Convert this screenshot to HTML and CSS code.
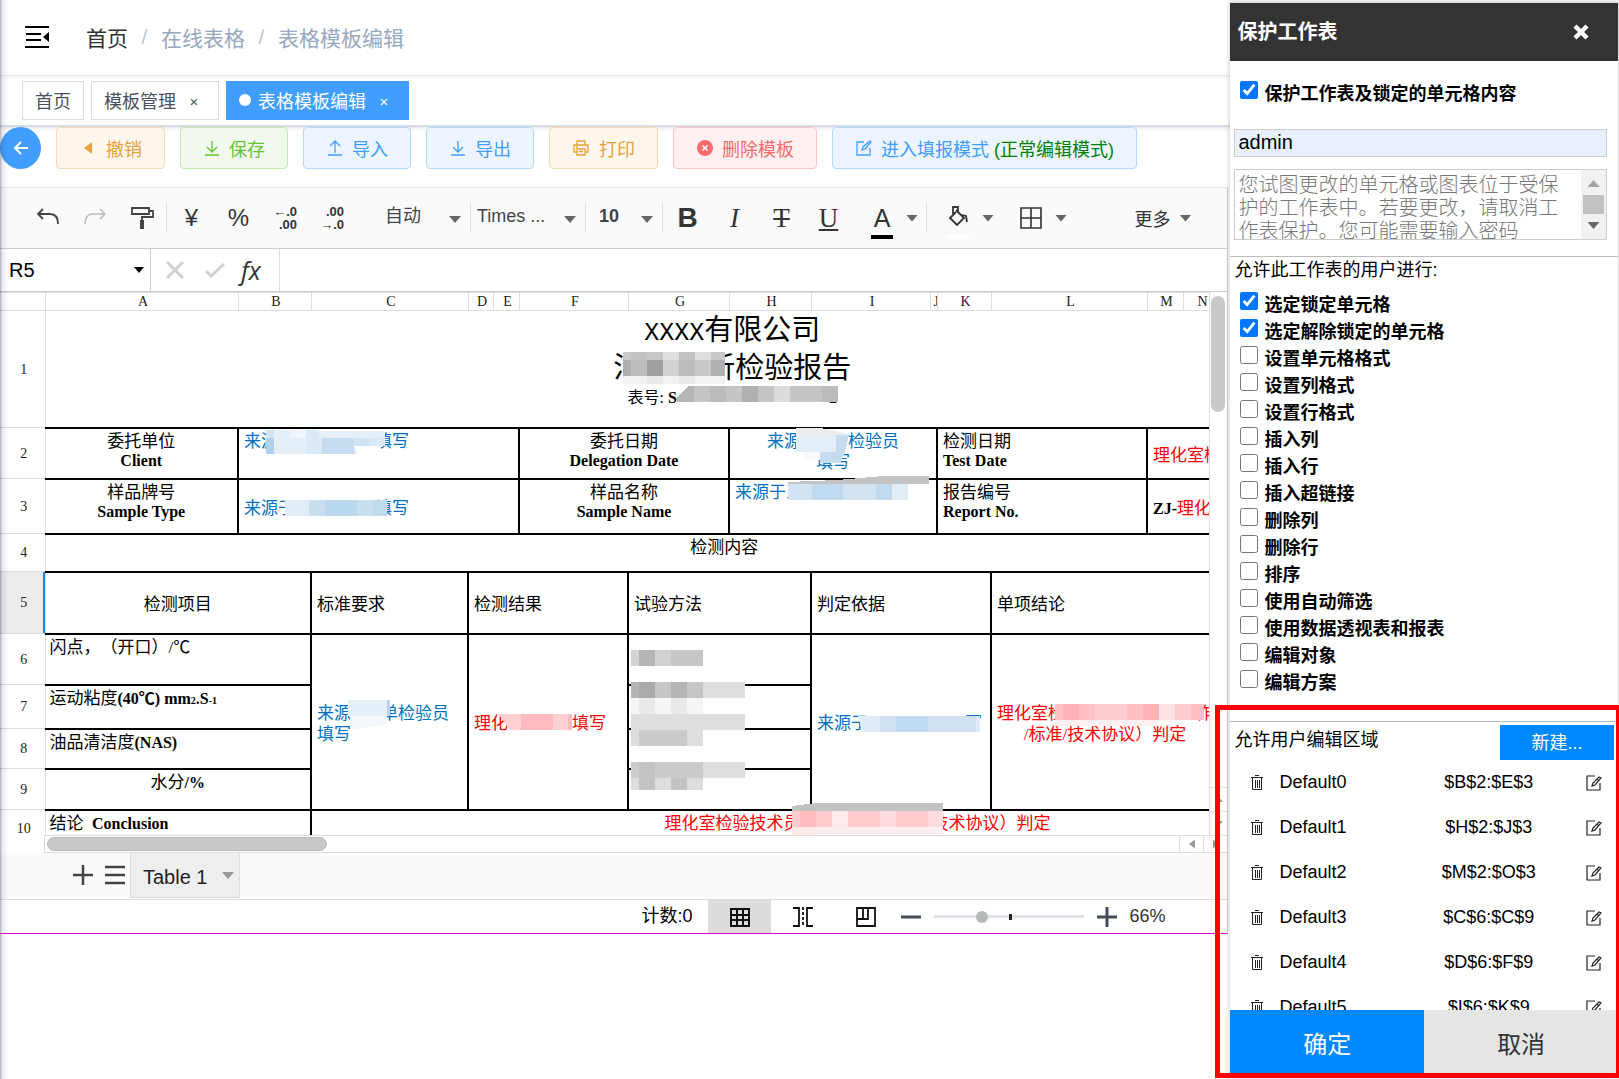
FILE: index.html
```html
<!DOCTYPE html>
<html lang="zh-CN">
<head>
    <meta charset="UTF-8">
    <meta name="viewport" content="width=device-width, initial-scale=1.0">
    <title>表格模板编辑</title>
    <link rel="stylesheet" href="styles.css">
</head>
<body>
<main class="app">
    <header class="navbar">
        <button class="hamburger" aria-label="菜单">
            <svg width="24" height="22" viewBox="0 0 24 22" fill="#000"><path d="M0 0h24v2H0zM1 7h15v2H1zM1 13h15v2H1zM0 20h24v2H0zM24 6v10l-6-5z"/></svg>
        </button>
        <nav class="breadcrumb">
            <a href="#">首页</a><i>/</i><span>在线表格</span><i>/</i><span>表格模板编辑</span>
        </nav>
    </header>

    <nav class="tags">
        <a class="tag" href="#">首页</a>
        <a class="tag" href="#">模板管理<span class="tag-close">×</span></a>
        <a class="tag active" href="#">表格模板编辑<span class="tag-close">×</span></a>
    </nav>

    <div class="actions">
        <button class="back" aria-label="返回">
            <svg width="16" height="16" viewBox="0 0 16 16" fill="none" stroke="#fff" stroke-width="2"><path d="M15 8H2M8 2L2 8l6 6"/></svg>
        </button>
        <button class="btn warning">
            <svg width="18" height="18" viewBox="0 0 18 18" fill="currentColor"><path d="M13 3v12L5 9z"/></svg>撤销
        </button>
        <button class="btn success">
            <svg width="18" height="18" viewBox="0 0 18 18" fill="none" stroke="currentColor" stroke-width="1.3"><path d="M2 16h14M9 2v11M4 8l5 5 5-5"/></svg>保存
        </button>
        <button class="btn primary">
            <svg width="18" height="18" viewBox="0 0 18 18" fill="none" stroke="currentColor" stroke-width="1.3"><path d="M2 16h14M9 14V2M4 7l5-5 5 5"/></svg>导入
        </button>
        <button class="btn primary">
            <svg width="18" height="18" viewBox="0 0 18 18" fill="none" stroke="currentColor" stroke-width="1.3"><path d="M2 16h14M9 2v11M4 8l5 5 5-5"/></svg>导出
        </button>
        <button class="btn warning">
            <svg width="18" height="18" viewBox="0 0 18 18" fill="none" stroke="currentColor" stroke-width="1.3"><path d="M5 6V2h8v4M5 13H2V6h14v7h-3M5 10h8v6H5zM4 8h2M7 12.500h4"/></svg>打印
        </button>
        <button class="btn danger">
            <svg width="18" height="18" viewBox="0 0 18 18"><circle cx="9" cy="9" r="8" fill="currentColor"/><path d="M6.500 6.500l5 5M11.500 6.500l-5 5" stroke="#fff" stroke-width="1.600"/></svg>删除模板
        </button>
        <button class="btn primary">
            <svg width="18" height="18" viewBox="0 0 18 18" fill="none" stroke="currentColor" stroke-width="1.3"><path d="M9 3H2v13h13V9M7 11l1-3 7-6 1 1-6 7z"/></svg>进入填报模式&nbsp;<span class="mode">(正常编辑模式)</span>
        </button>
    </div>

    <section class="editor">
        <div class="ribbon">
            <button class="tool" aria-label="撤消"><svg width="24" height="24" viewBox="0 0 24 24" fill="none" stroke="#444" stroke-width="1.800"><path d="M7 3L2 8l5 5M2 8h12c5 0 8 3 8 10"/></svg></button>
            <button class="tool" aria-label="重做"><svg width="24" height="24" viewBox="0 0 24 24" fill="none" stroke="#bbb" stroke-width="1.500"><path d="M17 3l5 5-5 5M22 8H10c-5 0-8 3-8 10"/></svg></button>
            <button class="tool" aria-label="格式刷"><svg width="24" height="24" viewBox="0 0 24 24" fill="none" stroke="#444" stroke-width="1.800"><path d="M2 2h17v6H2zM19 5h4v6H12v4"/><path d="M12 14v9" stroke-width="4"/></svg></button>
            <span class="sep"></span>
            <button class="tool sign">¥</button>
            <button class="tool sign">%</button>
            <button class="tool decimals"><span>←.0</span><span>.00</span></button>
            <button class="tool decimals"><span>.00</span><span>→.0</span></button>
            <select class="format-select" aria-label="数字格式"><option>自动</option></select>
            <span class="sep"></span>
            <select class="font-select" aria-label="字体"><option>Times ...</option></select>
            <span class="sep"></span>
            <select class="size-select" aria-label="字号"><option>10</option></select>
            <span class="sep"></span>
            <button class="tool bold">B</button>
            <button class="tool letter"><em>I</em></button>
            <button class="tool letter"><s>T</s></button>
            <button class="tool letter"><u>U</u></button>
            <button class="tool split color"><span class="swatch">A</span><i class="caret"></i></button>
            <span class="sep"></span>
            <button class="tool split fill" aria-label="填充颜色"><span class="swatch"><svg width="22" height="22" viewBox="0 0 22 22" fill="none" stroke="#333" stroke-width="1.800"><path d="M6 9V2h5v6M9 5l8 8-7 7-7-7 6-6M15 10l4 1 1 6"/></svg></span><i class="caret"></i></button>
            <button class="tool split" aria-label="边框"><svg width="22" height="22" viewBox="0 0 22 22" fill="none" stroke="#333" stroke-width="1.600"><path d="M1 1h20v20H1zM11 1v20M1 11h20"/></svg><i class="caret"></i></button>
            <button class="tool more">更多<i class="caret"></i></button>
        </div>

        <div class="formula-bar">
            <label class="name-box"><input type="text" value="R5" aria-label="名称框"><i class="caret"></i></label>
            <div class="formula-tools">
                <button aria-label="取消"><svg width="20" height="20" viewBox="0 0 20 20" fill="none" stroke="#d0d0d0" stroke-width="3"><path d="M2 2l16 16M18 2L2 18"/></svg></button>
                <button aria-label="输入"><svg width="20" height="20" viewBox="0 0 20 20" fill="none" stroke="#d0d0d0" stroke-width="3"><path d="M1 11l5 5L19 4"/></svg></button>
                <button class="fx">fx</button>
            </div>
            <input class="formula" type="text" aria-label="公式">
        </div>

        <div class="sheet-area">
            <div class="sheet">
                <table class="grid">
                    <colgroup>
                        <col class="c-head"><col class="c-a"><col class="c-b"><col class="c-c"><col class="c-d"><col class="c-e"><col class="c-f"><col class="c-g"><col class="c-h"><col class="c-i"><col class="c-j"><col class="c-k"><col class="c-l"><col class="c-m"><col class="c-n"><col class="c-o">
                    </colgroup>
                    <thead>
                        <tr><th></th><th>A</th><th>B</th><th>C</th><th>D</th><th>E</th><th>F</th><th>G</th><th>H</th><th>I</th><th>J</th><th>K</th><th>L</th><th>M</th><th>N</th><th>O</th></tr>
                    </thead>
                    <tbody>
                        <tr class="r1">
                            <th>1</th>
                            <td class="title" colspan="15">
                                <div class="name"><span class="latin">XXXX</span>有限公司</div>
                                <div class="name">油<span class="gap short"></span>析检验报告</div>
                                <div class="code">表号: <b>S</b><span class="gap full"></span><b>2</b></div>
                            </td>
                        </tr>
                        <tr class="r2">
                            <th>2</th>
                            <td class="pair center">委托单位<br><b>Client</b></td>
                            <td class="source" colspan="4">来源<span class="gap wide"></span>填写</td>
                            <td class="pair center" colspan="2">委托日期<br><b>Delegation Date</b></td>
                            <td class="source center" colspan="3">来源<span class="gap"></span>检验员<br>填写</td>
                            <td class="pair" colspan="2">检测日期<br><b>Test Date</b></td>
                            <td class="lab middle" colspan="3">理化室检验员填写</td>
                        </tr>
                        <tr class="r3">
                            <th>3</th>
                            <td class="pair center">样品牌号<br><b>Sample Type</b></td>
                            <td class="source middle" colspan="4">来源于<span class="gap medium"></span>填写</td>
                            <td class="pair center" colspan="2">样品名称<br><b>Sample Name</b></td>
                            <td class="source" colspan="3">来源于工</td>
                            <td class="pair" colspan="2">报告编号<br><b>Report No.</b></td>
                            <td class="lab middle" colspan="3"><b class="prefix">ZJ-</b>理化室</td>
                        </tr>
                        <tr class="r4">
                            <th>4</th>
                            <td class="center" colspan="15">检测内容</td>
                        </tr>
                        <tr class="r5">
                            <th class="current">5</th>
                            <td class="middle center" colspan="2">检测项目</td>
                            <td class="middle">标准要求</td>
                            <td class="middle" colspan="3">检测结果</td>
                            <td class="middle" colspan="2">试验方法</td>
                            <td class="middle" colspan="3">判定依据</td>
                            <td class="middle" colspan="3">单项结论</td>
                            <td></td>
                        </tr>
                        <tr class="r6">
                            <th>6</th>
                            <td class="item" colspan="2">闪点，（开口）/℃</td>
                            <td class="source middle" rowspan="4">来源<span class="gap small"></span>单检验员<br>填写</td>
                            <td class="lab middle" colspan="3" rowspan="4">理化<span class="gap short"></span>填写</td>
                            <td colspan="2"></td>
                            <td class="source middle" colspan="3" rowspan="4">来源于<span class="gap wide"></span>写</td>
                            <td class="lab middle center" colspan="3" rowspan="4">理化室检<span class="gap long"></span>作<br>/标准/技术协议）判定</td>
                            <td rowspan="4"></td>
                        </tr>
                        <tr class="r7">
                            <th>7</th>
                            <td class="item" colspan="2">运动粘度<b>(40℃) mm<small>2</small>.S<small>-1</small></b></td>
                            <td colspan="2"></td>
                        </tr>
                        <tr class="r8">
                            <th>8</th>
                            <td class="item" colspan="2">油品清洁度<b>(NAS)</b></td>
                            <td colspan="2"></td>
                        </tr>
                        <tr class="r9">
                            <th>9</th>
                            <td class="center" colspan="2">水分<b>/%</b></td>
                            <td colspan="2"></td>
                        </tr>
                        <tr class="r10">
                            <th>10</th>
                            <td class="item" colspan="2">结论&nbsp; <b>Conclusion</b></td>
                            <td class="lab center" colspan="13">理化室检验技术员<span class="gap long"></span>技术协议）判定</td>
                        </tr>
                    </tbody>
                </table>

                <!-- pixelated areas over the confidential text -->
                <svg class="mosaic" width="1210" height="543" viewBox="0 0 1210 543" shape-rendering="crispEdges" aria-hidden="true">
                    <g>
                        <path fill="#c8c8c8" d="M623 60h8v8h-8zM647 60h16v8h-16zM711 60h14v8h-14z"/>
                        <path fill="#c2c2c2" d="M631 60h16v8h-16zM679 60h16v8h-16z"/>
                        <path fill="#dedede" d="M663 60h16v8h-16zM695 60h16v8h-16z"/>
                        <path fill="#b0b0b0" d="M623 68h8v16h-8zM711 68h14v16h-14z"/>
                        <path fill="#bdbdbd" d="M631 68h16v16h-16zM679 68h16v16h-16z"/>
                        <path fill="#a0a0a0" d="M647 68h16v16h-16z"/>
                        <path fill="#d2d2d2" d="M663 68h16v16h-16z"/>
                        <path fill="#c9c9c9" d="M695 68h16v16h-16z"/>
                        <path fill="#f2f2f2" d="M623 84h102v8H623z"/>
                        <path fill="#e9e9e9" d="M647 84h16v8h-16zM679 84h16v8h-16z"/>
                    </g>
                    <g>
                        <path fill="#b6b6b6" d="M688 94h6v16h-17v-5z"/>
                        <path fill="#c5c5c5" d="M694 94h144v16H694z"/>
                        <path fill="#bbb" d="M710 94h16v16h-16zM822 94h16v16h-16z"/>
                        <path fill="#b1b1b1" d="M742 94h16v16h-16z"/>
                        <path fill="#dcdcdc" d="M774 94h16v16h-16z"/>
                    </g>
                    <g>
                        <path fill="#e5eff8" d="M266 138h53v1h66v15h-31l4 8h-92z"/>
                        <path fill="#cfe3f2" d="M266 138h8v8h-8zM354 146h16v8h-16z"/>
                        <path fill="#b0d1ea" d="M266 146h8v16h-8z"/>
                        <path fill="#f0f6fb" d="M290 138h16v8h-16z"/>
                        <path fill="#dae9f5" d="M306 138h13v8h-13zM306 146h16v16h-16zM370 146h15v8h-15z"/>
                        <path fill="#c5dcf1" d="M322 146h32v16h-32z"/>
                    </g>
                    <g>
                        <path fill="#e0edf7" d="M285 208h24v16h-24z"/>
                        <path fill="#c8dff0" d="M309 208h16v16h-16zM357 208h16v16h-16z"/>
                        <path fill="#b9d7ed" d="M325 208h32v16h-32z"/>
                        <path fill="#bedaed" d="M373 208h14v16h-14z"/>
                    </g>
                    <g>
                        <path fill="#ececec" d="M796 136h25l28 6v2h-53z"/>
                        <path fill="#e2eef8" d="M796 143h40v17h-40z"/>
                        <path fill="#c5dcf0" d="M836 143h13l-4 17-5 11h-20v-11h16z"/>
                        <path fill="#f8fafd" d="M804 160h16v8h-16z"/>
                    </g>
                    <g>
                        <path fill="#c3c3c3" d="M788 190l49-2 47-4h45v8H788z"/>
                        <path fill="#d2e4f3" d="M788 192h104v16H788z"/>
                        <path fill="#bfdaef" d="M812 192h31v16h-31zM876 192h16v16h-16z"/>
                        <path fill="#e0edf7" d="M892 192h16v16h-16z"/>
                    </g>
                    <g>
                        <path fill="#e4eff8" d="M348 408h39v16h-39z"/>
                        <path fill="#b5d3eb" d="M387 408h3v16h-3z"/>
                        <path fill="#f3f8fc" d="M350 424h37v8l-35 6z"/>
                    </g>
                    <g>
                        <path fill="#ffcfd1" d="M498 422h74v16h-62z"/>
                        <path fill="#ffbbbe" d="M521 422h32v16h-32zM568 422h4v16h-4z"/>
                    </g>
                    <g>
                        <path fill="#c6c6c6" d="M631 358h72v16h-72zM631 390h72v16h-72z"/>
                        <path fill="#d2d2d2" d="M631 358h8v16h-8zM655 358h16v16h-16z"/>
                        <path fill="#b5b5b5" d="M639 358h16v16h-16zM671 390h16v16h-16zM631 390h8v16h-8z"/>
                        <path fill="#aaa" d="M639 390h16v16h-16z"/>
                        <path fill="#dedede" d="M703 390h42v16h-42zM703 470h42v16h-42zM631 422h114v16H631zM631 438h8v16h-8zM687 438h16v16h-16z"/>
                        <path fill="#f5f5f5" d="M631 406h72v16h-72z"/>
                        <path fill="#e9e9e9" d="M639 406h16v16h-16zM671 406h16v16h-16z"/>
                        <path fill="#cbcbcb" d="M639 438h48v16h-48zM631 470h72v16h-72z"/>
                        <path fill="#c3c3c3" d="M639 470h16v16h-16zM639 486h16v12h-16zM671 486h16v12h-16z"/>
                        <path fill="#ddd" d="M631 486h8v12h-8zM655 486h16v12h-16zM687 486h16v12h-16z"/>
                    </g>
                    <g>
                        <path fill="#dfecf7" d="M858 424h22v16h-18zM976 424h4v16h-4z"/>
                        <path fill="#cfe2f3" d="M880 424h96v16h-96z"/>
                        <path fill="#bfdaee" d="M896 424h32v16h-32z"/>
                    </g>
                    <g>
                        <path fill="#ffc0c3" d="M1055 412h149v16h-149z"/>
                        <path fill="#ffb3b6" d="M1063 412h16v16h-16zM1143 412h16v16h-16z"/>
                        <path fill="#ffcdcf" d="M1095 412h32v16h-32zM1175 412h16v16h-16z"/>
                        <path fill="#ffe2e3" d="M1159 412h16v16h-16z"/>
                        <path fill="#fdf0f0" d="M1055 428h104v6h-104z"/>
                    </g>
                    <g>
                        <path fill="#c3c3c3" d="M792 514l25-3h126v8H792z"/>
                        <path fill="#ffcbcd" d="M792 519h151v16H792z"/>
                        <path fill="#ffbbbe" d="M800 519h16v16h-16z"/>
                        <path fill="#fdebeb" d="M832 519h16v16h-16zM792 535h24v8h-24z"/>
                        <path fill="#ffdcdd" d="M880 519h16v16h-16zM928 519h15v16h-15z"/>
                        <path fill="#fbeeee" d="M816 535h127v7H816z"/>
                    </g>
                </svg>
            </div>
            <div class="v-scroll">
                <div class="thumb"></div>
                <button aria-label="向上"><i class="caret up"></i></button>
                <button aria-label="向下"><i class="caret"></i></button>
            </div>
        </div>
        <div class="h-scroll">
            <div class="thumb"></div>
            <button aria-label="向左"><i class="caret left"></i></button>
            <button aria-label="向右"><i class="caret right"></i></button>
        </div>

        <div class="sheet-tabs">
            <button aria-label="添加"><svg width="20" height="20" viewBox="0 0 20 20" stroke="#444" stroke-width="2.500"><path d="M10 0v20M0 10h20"/></svg></button>
            <button aria-label="工作表列表"><svg width="20" height="20" viewBox="0 0 20 20" stroke="#444" stroke-width="2.500"><path d="M0 2h20M0 10h20M0 18h20"/></svg></button>
            <button class="sheet-tab">Table 1<i class="caret"></i></button>
        </div>

        <footer class="status">
            <span class="count">计数:0</span>
            <button class="view active" aria-label="普通"><svg width="20" height="20" viewBox="0 0 20 20" fill="none" stroke="#111" stroke-width="2"><path d="M1 2h18v17H1zM7 2v17M13 2v17M1 8h18M1 13h18"/></svg></button>
            <button class="view" aria-label="分页预览"><svg width="20" height="20" viewBox="0 0 20 20" fill="none" stroke="#111" stroke-width="1.800"><path d="M0 1h6v18H0M20 1h-6v18h6"/><path d="M10 0v20" stroke-dasharray="3 2"/></svg></button>
            <button class="view" aria-label="页面布局"><svg width="20" height="20" viewBox="0 0 20 20" fill="none" stroke="#111" stroke-width="1.800"><path d="M1 1h18v18H1zM1 12h11V1M7 1v11"/></svg></button>
            <button class="zoom" aria-label="缩小"><svg width="22" height="22" viewBox="0 0 22 22" stroke="#444b5a" stroke-width="3"><path d="M1 11h20"/></svg></button>
            <div class="slider"><input type="range" min="0" max="100" value="30" aria-label="缩放"></div>
            <button class="zoom" aria-label="放大"><svg width="22" height="22" viewBox="0 0 22 22" stroke="#444b5a" stroke-width="3"><path d="M1 11h20M11 1v20"/></svg></button>
            <span class="percent">66%</span>
        </footer>
    </section>
</main>

<aside class="panel">
    <header class="panel-header">
        <h2>保护工作表</h2>
        <button aria-label="关闭"><svg width="16" height="16" viewBox="0 0 16 16" stroke="#fff" stroke-width="4.500"><path d="M2 2l12 12M14 2L2 14"/></svg></button>
    </header>
    <div class="protect">
        <label class="check"><input type="checkbox" checked>保护工作表及锁定的单元格内容</label>
        <input class="password" type="text" value="admin" aria-label="密码">
        <div class="message">
            <textarea aria-label="提示信息">您试图更改的单元格或图表位于受保护的工作表中。若要更改，请取消工作表保护。您可能需要输入密码</textarea>
            <div class="message-scroll"><i class="caret up"></i><span></span><i class="caret"></i></div>
        </div>
    </div>
    <div class="permissions">
        <h3>允许此工作表的用户进行:</h3>
        <label class="check"><input type="checkbox" checked>选定锁定单元格</label>
        <label class="check"><input type="checkbox" checked>选定解除锁定的单元格</label>
        <label class="check"><input type="checkbox">设置单元格格式</label>
        <label class="check"><input type="checkbox">设置列格式</label>
        <label class="check"><input type="checkbox">设置行格式</label>
        <label class="check"><input type="checkbox">插入列</label>
        <label class="check"><input type="checkbox">插入行</label>
        <label class="check"><input type="checkbox">插入超链接</label>
        <label class="check"><input type="checkbox">删除列</label>
        <label class="check"><input type="checkbox">删除行</label>
        <label class="check"><input type="checkbox">排序</label>
        <label class="check"><input type="checkbox">使用自动筛选</label>
        <label class="check"><input type="checkbox">使用数据透视表和报表</label>
        <label class="check"><input type="checkbox">编辑对象</label>
        <label class="check"><input type="checkbox">编辑方案</label>
    </div>
    <div class="ranges">
        <div class="ranges-title">
            <h3>允许用户编辑区域</h3>
            <button>新建...</button>
        </div>
        <svg class="symbols" aria-hidden="true">
            <symbol id="trash" viewBox="0 0 12 16"><path d="M0 2.500h12M4 .5h4M1.500 3v11.500h9V3M4.500 5v8M6.500 5v8M8.500 5v8" fill="none" stroke="#222" stroke-width="1"/></symbol>
            <symbol id="edit" viewBox="0 0 16 16"><path d="M9 1H1v14h13V8M6 11l1-3 6-6 2 1-6 7zM11 4l2 2" fill="none" stroke="#222" stroke-width="1.200"/></symbol>
        </svg>
        <table>
            <tr><td><button aria-label="删除"><svg width="12" height="16"><use href="#trash"/></svg></button></td><td>Default0</td><td>$B$2:$E$3</td><td><button aria-label="编辑"><svg width="16" height="16"><use href="#edit"/></svg></button></td></tr>
            <tr><td><button aria-label="删除"><svg width="12" height="16"><use href="#trash"/></svg></button></td><td>Default1</td><td>$H$2:$J$3</td><td><button aria-label="编辑"><svg width="16" height="16"><use href="#edit"/></svg></button></td></tr>
            <tr><td><button aria-label="删除"><svg width="12" height="16"><use href="#trash"/></svg></button></td><td>Default2</td><td>$M$2:$O$3</td><td><button aria-label="编辑"><svg width="16" height="16"><use href="#edit"/></svg></button></td></tr>
            <tr><td><button aria-label="删除"><svg width="12" height="16"><use href="#trash"/></svg></button></td><td>Default3</td><td>$C$6:$C$9</td><td><button aria-label="编辑"><svg width="16" height="16"><use href="#edit"/></svg></button></td></tr>
            <tr><td><button aria-label="删除"><svg width="12" height="16"><use href="#trash"/></svg></button></td><td>Default4</td><td>$D$6:$F$9</td><td><button aria-label="编辑"><svg width="16" height="16"><use href="#edit"/></svg></button></td></tr>
            <tr><td><button aria-label="删除"><svg width="12" height="16"><use href="#trash"/></svg></button></td><td>Default5</td><td>$I$6:$K$9</td><td><button aria-label="编辑"><svg width="16" height="16"><use href="#edit"/></svg></button></td></tr>
        </table>
    </div>
    <div class="panel-footer">
        <button class="ok">确定</button>
        <button>取消</button>
    </div>
    <div class="highlight"></div>
</aside>
</body>
</html>
```

FILE: styles.css
```css
* {
    box-sizing: border-box;
}
body {
    margin: 0;
    height: 100vh;
    overflow: hidden;
    display: grid;
    grid-template-columns: minmax(0, 1fr) 24%;
    font-family: "Liberation Sans", "Noto Sans CJK SC", sans-serif;
    font-size: 18px;
    color: #000;
    background: #fff;
}
button {
    font: inherit;
    color: inherit;
    padding: 0;
    border: 0;
    background: none;
}
svg {
    display: block;
    flex: none;
}
.app {
    position: relative;
    min-width: 0;
}
.app::before {
    content: "";
    position: absolute;
    z-index: 2;
    top: 0;
    left: 0;
    width: 8px;
    height: 100vh;
    background: linear-gradient(90deg, rgba(40, 45, 80, .38), rgba(40, 45, 80, .1) 30%, transparent);
}

/* top navigation */
.navbar {
    height: 76px;
    display: flex;
    align-items: center;
    gap: 37px;
    padding: 0 0 2px 25px;
    border-bottom: 1px solid #f0f0f0;
    box-shadow: 0 1px 4px rgba(0, 21, 41, .08);
}
.breadcrumb {
    display: flex;
    font-size: 21px;
    color: #97a8be;
}
.breadcrumb a {
    color: #303133;
    text-decoration: none;
}
.breadcrumb i {
    width: 33px;
    padding-top: 3px;
    text-align: center;
    font-style: normal;
    color: #c0c4cc;
}
.tags {
    height: 51px;
    display: flex;
    align-items: center;
    gap: 7px;
    padding: 0 22px;
    border-bottom: 2px solid #d8dce5;
    box-shadow: 0 1px 4px rgba(0, 0, 0, .12);
}
.tag {
    height: 39px;
    padding: 0 12px 2px;
    display: flex;
    align-items: center;
    border: 1px solid #d8dce5;
    color: #495060;
    text-decoration: none;
}
.tag.active {
    color: #fff;
    background: #409eff;
    border-color: #409eff;
}
.tag.active::before {
    content: "";
    width: 12px;
    height: 12px;
    margin-right: 7px;
    border-radius: 50%;
    background: #fff;
}
.tag-close {
    width: 16px;
    margin: 3px 4px 0 10px;
    text-align: center;
    font-size: 15px;
}

/* action buttons */
.actions {
    height: 60px;
    display: flex;
    align-items: flex-start;
    gap: 15px;
}
.back {
    width: 41px;
    height: 42px;
    border-radius: 50%;
    background: #409eff;
    display: flex;
    align-items: center;
    justify-content: center;
}
.btn {
    height: 42px;
    padding: 0 22px;
    display: flex;
    align-items: center;
    border: 1px solid;
    border-radius: 4px;
    white-space: nowrap;
}
.btn svg {
    margin-right: 8px;
}
.btn.warning svg {
    margin-right: 9px;
}
.btn.warning {
    color: #e6a23c;
    background: #fdf6ec;
    border-color: #f5dab1;
}
.btn.success {
    color: #67c23a;
    background: #f0f9eb;
    border-color: #c2e7b0;
}
.btn.primary {
    color: #409eff;
    background: #ecf5ff;
    border-color: #b3d8ff;
}
.btn.danger {
    color: #f56c6c;
    background: #fef0f0;
    border-color: #fbc4c4;
}
.mode {
    color: green;
}

/* editor toolbar */
.editor {
    margin-right: 2px;
    border-right: 1px solid #ccc;
    border-top: 1px solid #e3e3e3;
    border-bottom: 1px solid #e0c;
}
.ribbon {
    height: 61px;
    padding: 0 20px 0 24px;
    display: flex;
    align-items: center;
    color: #333;
    background: #fafafc;
    border-bottom: 1px solid #ccc;
}
.tool {
    flex: none;
    width: 47px;
    height: 40px;
    display: flex;
    align-items: center;
    justify-content: center;
}
.sep {
    flex: none;
    width: 1px;
    height: 30px;
    margin: 0 1px;
    background: #ddd;
}
.caret {
    flex: none;
    width: 12px;
    height: 7px;
    background: #666;
    clip-path: polygon(0 0, 100% 0, 50% 100%);
}
.caret.up {
    clip-path: polygon(50% 0, 100% 100%, 0 100%);
}
.caret.left,
.caret.right {
    width: 6px;
    height: 9px;
    clip-path: polygon(0 50%, 100% 0, 100% 100%);
}
.caret.right {
    clip-path: polygon(0 0, 100% 50%, 0 100%);
}
.sign {
    font-size: 24px;
}
.decimals {
    flex-direction: column;
    align-items: flex-end;
    padding-right: 12px;
    font-size: 13px;
    line-height: 13px;
    font-weight: bold;
}
.ribbon select {
    flex: none;
    height: 40px;
    padding: 0 0 4px;
    border: 0;
    appearance: none;
    font: inherit;
    color: #444;
    background: url("data:image/svg+xml,%3Csvg xmlns='http://www.w3.org/2000/svg' width='12' height='7'%3E%3Cpath d='M0 0h12L6 7z' fill='%23666'/%3E%3C/svg%3E") right 8px top 18px no-repeat;
}
.ribbon .format-select {
    width: 99px;
    margin-left: 14px;
    padding-left: 15px;
}
.ribbon .font-select {
    width: 112px;
    padding-left: 5px;
}
.ribbon .size-select {
    width: 74px;
    padding-left: 12px;
    font-weight: bold;
}
.bold {
    font-size: 28px;
    font-weight: bold;
}
.letter {
    font-family: "Liberation Serif", serif;
    font-size: 27px;
}
.split {
    width: 73px;
    gap: 13px;
    padding-left: 12px;
}
.swatch {
    width: 22px;
    height: 36px;
    padding-top: 2px;
    font-size: 25px;
    line-height: 26px;
    border-bottom: 4px solid #000;
    margin-top: 5px;
}
.fill .swatch {
    border-color: #fff;
}
.more {
    width: auto;
    margin-left: auto;
    gap: 9px;
    padding-right: 16px;
}

/* formula bar */
.formula-bar {
    height: 43px;
    display: flex;
    border-bottom: 1px solid #ccc;
}
.formula-bar input {
    border: 0;
    outline: 0;
    font: 20px "Liberation Sans", sans-serif;
    background: none;
}
.name-box {
    width: 151px;
    display: flex;
    align-items: center;
    padding: 0 6px 0 9px;
    border-right: 1px solid #ccc;
}
.name-box input {
    flex: 1;
    min-width: 0;
    padding: 0;
}
.name-box .caret {
    width: 10px;
    height: 6px;
    background: #000;
}
.formula-tools {
    width: 129px;
    display: flex;
    align-items: center;
    gap: 20px;
    padding-left: 14px;
    border-right: 1px solid #ddd;
}
.formula {
    flex: 1;
}
.fx {
    margin-left: -4px;
    font: italic 25px "Open Sans", sans-serif;
    color: #333;
}

/* spreadsheet */
.sheet-area {
    display: grid;
    grid-template-columns: minmax(0, 1fr) 18px;
    height: 543px;
}
.sheet {
    position: relative;
    overflow: hidden;
}
.mosaic {
    position: absolute;
    top: 0;
    left: 0;
}
.grid {
    width: 1405px;
    table-layout: fixed;
    border-collapse: collapse;
    font-family: "Liberation Serif", "Noto Sans CJK SC", serif;
    font-size: 17px;
    line-height: 21px;
    text-spacing-trim: space-all;
}
.grid b {
    font-size: 16px;
}
.grid th {
    padding: 1px 0 0 3px;
    border: 1px solid #ddd;
    border-left: 0;
    font-size: 14px;
    font-weight: normal;
    line-height: 16px;
    color: #222;
    overflow: hidden;
}
.grid td {
    padding: 2px 5px;
    border: 2px solid #000;
    vertical-align: top;
    white-space: nowrap;
}
.grid th + td {
    border-left: 1px solid #ddd;
}
.grid th.current {
    background: #ececec;
    box-shadow: inset -2px 0 #1a86d9;
}
.grid td.title {
    padding: 2px 0 0 16px;
    border-top: 0;
    text-align: center;
}
.grid td.pair {
    padding-top: 3px;
    line-height: 19px;
}
.grid td.item {
    padding-left: 4px;
}
.grid td.center {
    text-align: center;
}
.grid td.middle {
    padding-top: 6px;
    vertical-align: middle;
}
.grid td.source {
    color: #0070c0;
}
.grid td.lab {
    color: #f00;
}
.prefix {
    color: #000;
}
.grid small {
    font-size: 10px;
}
.name {
    font-size: 29px;
    line-height: 34px;
}
.latin {
    font-family: "Liberation Mono", monospace;
    font-size: 25px;
}
.code {
    font-size: 16px;
    line-height: 26px;
}

/* space taken by hidden words */
.gap {
    display: inline-block;
    width: 47px;
}
.gap.small { width: 30px; }
.gap.short { width: 64px; }
.gap.medium { width: 80px; }
.gap.wide { width: 97px; }
.gap.long { width: 131px; }
.gap.full { width: 152px; }

.c-head { width: 45px; }
.c-a { width: 193px; }
.c-b { width: 73px; }
.c-c { width: 157px; }
.c-d { width: 25px; }
.c-e { width: 26px; }
.c-f { width: 109px; }
.c-g { width: 101px; }
.c-h { width: 82px; }
.c-i { width: 119px; }
.c-j { width: 7px; }
.c-k { width: 54px; }
.c-l { width: 156px; }
.c-m { width: 36px; }
.c-n { width: 36px; }
.grid thead tr { height: 18px; }
.r1 { height: 117px; }
.r2 { height: 51px; }
.r3 { height: 55px; }
.r4 { height: 38px; }
.r5 { height: 62px; }
.r6 { height: 51px; }
.r7 { height: 44px; }
.r8 { height: 40px; }
.r9 { height: 41px; }
.r10 { height: 38px; }

.v-scroll {
    display: flex;
    flex-direction: column;
    border-left: 1px solid #ddd;
}
.v-scroll .thumb {
    width: 14px;
    height: 116px;
    margin: 4px 2px auto 1px;
    border-radius: 7px;
    background: #c8c8c8;
}
.v-scroll button,
.h-scroll button {
    display: flex;
    align-items: center;
    justify-content: center;
    border: 0 solid #ddd;
}
.v-scroll button {
    height: 24px;
    border-top-width: 1px;
}
.v-scroll .caret,
.h-scroll .caret {
    background: #999;
}
.v-scroll .caret {
    width: 8px;
    height: 5px;
}
.h-scroll {
    height: 18px;
    margin-left: 44px;
    display: flex;
    align-items: center;
    border: 1px solid #ddd;
    border-right: 0;
}
.h-scroll .thumb {
    width: 280px;
    height: 14px;
    margin: 0 auto 0 2px;
    border: 1px solid #bbb;
    border-radius: 7px;
    background: #c8c8c8;
}
.h-scroll button {
    width: 24px;
    height: 16px;
    border-left-width: 1px;
}

/* sheet tabs and status line */
.sheet-tabs {
    height: 47px;
    display: flex;
    align-items: center;
    gap: 12px;
    padding: 0 0 2px 73px;
    background: #fafafc;
    border-bottom: 1px solid #ddd;
}
.sheet-tab {
    width: 110px;
    height: 45px;
    margin-left: -7px;
    padding: 5px 5px 0 12px;
    display: flex;
    align-items: center;
    justify-content: space-between;
    font-size: 20px;
    color: #222;
    background: #eee;
    border: 1px solid #ddd;
    border-top: 0;
}
.sheet-tab .caret {
    margin-bottom: 3px;
    background: #999;
}
.status {
    height: 33px;
    display: flex;
    align-items: center;
    justify-content: flex-end;
    padding-right: 62px;
}
.count {
    margin: 0 16px 5px 0;
}
.view {
    width: 63px;
    height: 33px;
    display: flex;
    align-items: center;
    justify-content: center;
}
.view.active {
    background: #dcdcdc;
}
.slider {
    position: relative;
    width: 150px;
    margin: 0 12px;
    display: flex;
}
.slider::after {
    content: "";
    position: absolute;
    left: 50%;
    top: 5px;
    width: 3px;
    height: 6px;
    background: #222;
}
.slider input {
    width: 100%;
    height: 16px;
    margin: 0;
    appearance: none;
    background: linear-gradient(#dfe2e6, #dfe2e6) center / 100% 3px no-repeat;
}
.slider input::-webkit-slider-thumb {
    appearance: none;
    width: 12px;
    height: 12px;
    border-radius: 50%;
    background: #b4bbb7;
}
.view + .zoom {
    margin-left: 3px;
}
.percent {
    margin-left: 11px;
    color: #333;
}

/* protect sheet panel */
.panel {
    position: relative;
    z-index: 3;
    height: calc(100vh - 4px);
    margin-top: 2px;
    display: flex;
    flex-direction: column;
    border: 1px solid #ddd;
    border-left: 0;
    background: #fff;
    box-shadow: 0 0 5px rgba(0, 0, 0, .25);
}
.panel h2,
.panel h3 {
    margin: 0;
}
.panel-header {
    height: 58px;
    flex: none;
    display: flex;
    align-items: center;
    justify-content: space-between;
    padding: 0 29px 0 7px;
    color: #fff;
    background: #333;
}
.panel-header h2 {
    font-size: 20px;
    line-height: 30px;
}
.panel h3 {
    font-size: 18px;
    font-weight: normal;
    line-height: 27px;
}
.protect {
    padding: 20px 11px 16px 4px;
    border-bottom: 1px solid #bbb;
}
.check {
    display: flex;
    gap: 6px;
    padding-left: 6px;
    font-weight: bold;
    line-height: 27px;
}
.check input {
    width: 18px;
    height: 18px;
    margin: 0;
}
.password {
    display: block;
    width: 100%;
    height: 28px;
    margin: 21px 0 12px;
    padding: 0 3px 2px;
    border: 1px solid #ccc;
    font: 20px "Liberation Sans", sans-serif;
    background: #e8f0fe;
}
.message {
    height: 71px;
    display: flex;
    border: 1px solid #ccc;
}
.message textarea {
    flex: 1;
    min-width: 0;
    margin: 0;
    padding: 2px 4px 0 3px;
    border: 0;
    resize: none;
    overflow: hidden;
    font: 300 20px/23px "Noto Sans CJK SC", sans-serif;
    color: #777;
}
.message-scroll {
    width: 25px;
    display: flex;
    flex-direction: column;
    align-items: center;
    justify-content: space-between;
    padding: 10px 0;
    background: #f1f1f1;
}
.message-scroll span {
    width: 21px;
    height: 19px;
    background: #c1c1c1;
}
.message-scroll .up {
    background: #a3a3a3;
}
.permissions {
    padding: 0 4px 24px;
    border-bottom: 1px solid #bbb;
}
.permissions h3 {
    margin-bottom: 8px;
}
.ranges {
    flex: 1;
    min-height: 0;
    overflow: hidden;
}
.ranges-title {
    height: 38px;
    display: flex;
    align-items: center;
    justify-content: space-between;
    padding: 2px 4px 0;
}
.ranges-title h3 {
    padding-bottom: 3px;
}
.ranges-title button {
    width: 114px;
    height: 35px;
    padding-bottom: 3px;
    color: #fff;
    background: #08f;
}
.symbols {
    width: 0;
    height: 0;
}
.ranges table {
    width: 100%;
    border-collapse: collapse;
    table-layout: fixed;
}
.ranges td {
    height: 45px;
    padding: 0;
}
.ranges td:first-child {
    width: 49px;
    padding-left: 21px;
}
.ranges td:nth-child(2) {
    width: 120px;
}
.ranges td:nth-child(3) {
    text-align: center;
}
.ranges td:last-child {
    width: 40px;
    padding-left: 8px;
}
.ranges td button {
    display: block;
}
.panel-footer {
    height: 66px;
    flex: none;
    display: flex;
}
.panel-footer button {
    flex: 1;
    padding-bottom: 2px;
    font-size: 24px;
    color: #333;
    background: #e5e5e5;
}
.panel-footer .ok {
    color: #fff;
    background: #08f;
}
.highlight {
    position: absolute;
    top: 702px;
    left: -15px;
    right: -3px;
    bottom: -2px;
    border: 5px solid #f00;
    pointer-events: none;
}
```
